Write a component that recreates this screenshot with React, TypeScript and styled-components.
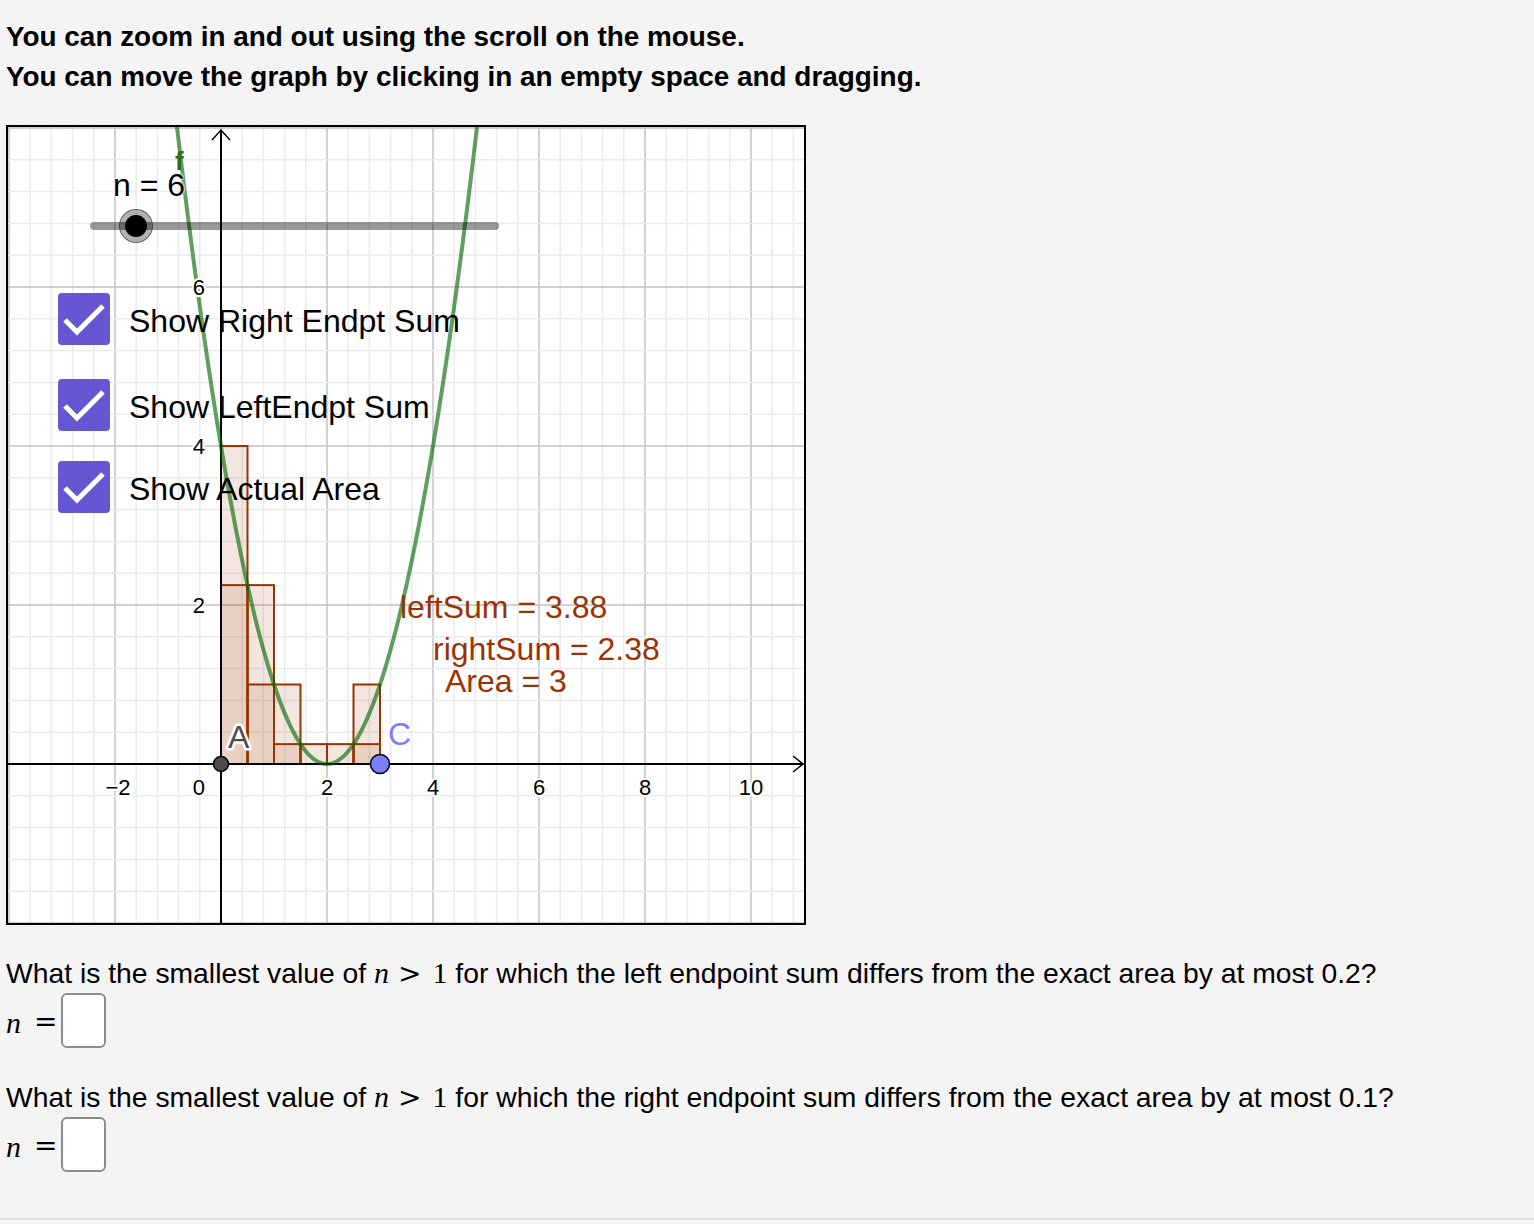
import React from 'react'
import styled, { createGlobalStyle } from 'styled-components'

const GlobalStyle = createGlobalStyle`
	html, body {
		margin: 0;
		padding: 0;
		background: #f4f4f4;
	}

	body {
		font-family: 'Liberation Sans', Arial, sans-serif;
		color: #000;
	}
`

// Graph geometry (inner canvas pixels)
const W = 796
const H = 796
const OX = 213
const OY = 637
const SX = 53
const SY = 79.5
const px = (x: number) => OX + x * SX
const py = (y: number) => OY - y * SY
const f = (x: number) => (x - 2) ** 2

const N = 6
const LO = 0
const HI = 3
const DX = (HI - LO) / N

const BROWN = '#993300'

const Page = styled.div`
	padding: 17px 0 0 6px;
`

const IntroLine = styled.p`
	margin: 0;
	font-size: 27.9px;
	font-weight: bold;
	line-height: 40px;
`

const GraphFrame = styled.div`
	position: relative;
	width: ${W}px;
	height: ${H}px;
	margin-top: 28px;
	border: 2px solid #000;
	background: #fff;
	overflow: hidden;

	svg {
		display: block;
	}
`

const AxisLabel = styled.text`
	font-family: 'Liberation Sans', Arial, sans-serif;
	font-size: 22px;
	fill: #000;
	stroke: #fff;
	stroke-width: 4px;
	stroke-linejoin: round;
	paint-order: stroke;
`

const CurveLabel = styled.text`
	font-family: 'Liberation Sans', Arial, sans-serif;
	font-size: 26px;
	font-weight: bold;
	fill: #2e6b1f;
`

const PointLabel = styled.text<{ $color: string }>`
	font-family: 'Liberation Sans', Arial, sans-serif;
	font-size: 32px;
	fill: ${p => p.$color};
	stroke: #fff;
	stroke-width: 5px;
	stroke-linejoin: round;
	paint-order: stroke;
`

const SumText = styled.text`
	font-family: 'Liberation Sans', Arial, sans-serif;
	font-size: 32px;
	fill: ${BROWN};
`

const Slider = styled.div`
	position: absolute;
	left: 82px;
	top: 40px;
	width: 409px;
`

const SliderLabel = styled.div`
	padding-left: 23px;
	font-size: 32px;
	line-height: 36px;
	text-shadow: 0 0 3px #fff, 0 0 3px #fff, 0 0 2px #fff;
`

const Track = styled.div`
	position: relative;
	height: 8px;
	margin-top: 19px;
	border-radius: 4px;
	background: rgba(0, 0, 0, 0.4);
`

const Knob = styled.span<{ $pos: number }>`
	position: absolute;
	left: ${p => p.$pos - 17}px;
	top: -13px;
	width: 34px;
	height: 34px;
	box-sizing: border-box;
	border-radius: 50%;
	border: 1.5px solid rgba(0, 0, 0, 0.45);
	background: rgba(0, 0, 0, 0.3);

	&::after {
		content: '';
		position: absolute;
		left: 4.5px;
		top: 4.5px;
		width: 22px;
		height: 22px;
		border-radius: 50%;
		background: #000;
	}
`

const CheckRow = styled.label<{ $top: number }>`
	position: absolute;
	left: 50px;
	top: ${p => p.$top}px;
	display: flex;
	align-items: center;
	gap: 19px;
	font-size: 32px;
	line-height: 1;
	white-space: nowrap;
`

const CheckBox = styled.span`
	display: flex;
	align-items: center;
	justify-content: center;
	width: 52px;
	height: 52px;
	border-radius: 4px;
	background: #6557d2;
`

const CheckText = styled.span`
	padding-top: 3px;
`

const Question = styled.p<{ $gap: number }>`
	margin: ${p => p.$gap}px 0 0;
	font-size: 28.3px;
	line-height: 40px;
	white-space: nowrap;
`

const MathVar = styled.span`
	font-family: 'Liberation Serif', 'Times New Roman', serif;
	font-style: italic;
	font-size: 30px;
	line-height: 1;
`

const MathNum = styled.span`
	font-family: 'Liberation Serif', 'Times New Roman', serif;
	font-size: 30px;
	line-height: 1;
`

const MathOp = styled.span<{ $left: number; $right: number }>`
	font-family: 'DejaVu Serif', 'Liberation Serif', serif;
	font-size: 28px;
	line-height: 1;
	margin: 0 ${p => p.$right}px 0 ${p => p.$left}px;
`

const AnswerRow = styled.div`
	display: flex;
	align-items: center;
	height: 55px;

	${MathVar} {
		margin-top: 4px;
	}

	${MathOp} {
		margin-top: 2px;
	}
`

const AnswerBox = styled.input`
	width: 45px;
	height: 55px;
	box-sizing: border-box;
	margin: 0;
	border: 2px solid #8c8c8c;
	border-radius: 6px;
	background: #fff;
	outline: none;
`

const Footer = styled.div`
	margin-top: 46px;
	height: 6px;
	border-top: 2px solid #dedede;
`

const CheckMark = () => (
	<svg width="52" height="52" viewBox="0 0 52 52">
		<polyline points="7,27 19,39 45,13" fill="none" stroke="#fff" strokeWidth="5" />
	</svg>
)

const Graph = () => {
	const verticals = Array.from({ length: 38 }, (_, k) => ({ at: 1 + 21.2 * k, major: k % 5 === 0 }))
	const horizontals = Array.from({ length: 26 }, (_, k) => ({ at: 796 - 31.8 * k, major: k % 5 === 0 }))

	const curve: string[] = []
	for(let x = -1; x <= 5.001; x += 0.02) {
		curve.push(`${ curve.length ? 'L' : 'M' }${ px(x).toFixed(2) },${ py(f(x)).toFixed(2) }`)
	}

	const rects = Array.from({ length: N }, (_, i) => {
		const x0 = LO + i * DX
		return [f(x0), f(x0 + DX)].map(h => ({ x: px(x0), y: py(h), h: h * SY }))
	}).flat()

	return (
		<svg width={ W } height={ H } viewBox={ `0 0 ${ W } ${ H }` }>
			{verticals.map(l => (
				<line key={ `v${ l.at }` } x1={ l.at } x2={ l.at } y1={ 0 } y2={ H }
					stroke={ l.major ? '#c2c2c2' : '#ebebeb' } strokeWidth={ 1.5 } />
			))}
			{horizontals.map(l => (
				<line key={ `h${ l.at }` } x1={ 0 } x2={ W } y1={ l.at } y2={ l.at }
					stroke={ l.major ? '#c2c2c2' : '#ebebeb' } strokeWidth={ 1.5 } />
			))}

			{rects.map((r, i) => (
				<rect key={ i } x={ r.x } y={ r.y } width={ DX * SX } height={ r.h }
					fill={ BROWN } fillOpacity={ 0.12 } stroke={ BROWN } strokeWidth={ 2 } />
			))}

			{/* axes */}
			<line x1={ 0 } x2={ W - 1 } y1={ OY } y2={ OY } stroke="#000" strokeWidth={ 2 } />
			<polyline points={ `${ W - 11 },${ OY - 8 } ${ W - 1 },${ OY } ${ W - 11 },${ OY + 8 }` } fill="none" stroke="#000" strokeWidth={ 1.5 } />
			<line x1={ OX } x2={ OX } y1={ 3 } y2={ H } stroke="#000" strokeWidth={ 2 } />
			<polyline points={ `${ OX - 9 },${ 13 } ${ OX },${ 3 } ${ OX + 9 },${ 13 }` } fill="none" stroke="#000" strokeWidth={ 1.5 } />

			<path d={ curve.join(' ') } fill="none" stroke="#006400" strokeOpacity={ 0.62 } strokeWidth={ 4 } />
			<CurveLabel x={ 167 } y={ 43 }>f</CurveLabel>

			{[-2, 2, 4, 6, 8, 10].map(v => (
				<AxisLabel key={ v } x={ px(v) + (v < 0 ? 3 : 0) } y={ 668 } textAnchor="middle">
					{v < 0 ? `\u2212${ -v }` : v}
				</AxisLabel>
			))}
			<AxisLabel x={ 197 } y={ 668 } textAnchor="end">0</AxisLabel>
			{[2, 4, 6].map(v => (
				<AxisLabel key={ v } x={ 197 } y={ py(v) + 8 } textAnchor="end">{v}</AxisLabel>
			))}

			<SumText x={ 392 } y={ 491 }>leftSum = 3.88</SumText>
			<SumText x={ 425 } y={ 533 }>rightSum = 2.38</SumText>
			<SumText x={ 437 } y={ 565 }>Area = 3</SumText>

			<circle cx={ px(0) } cy={ OY } r={ 7.5 } fill="#4d4d4d" stroke="#000" strokeWidth={ 1.5 } />
			<PointLabel $color="#4d4d4d" x={ 220 } y={ 621 }>A</PointLabel>
			<circle cx={ px(3) } cy={ OY } r={ 9.5 } fill="#7d7dff" stroke="#000" strokeWidth={ 1.5 } />
			<PointLabel $color="#7d7dff" x={ 380 } y={ 618 }>C</PointLabel>
		</svg>
	)
}

const checks = [
	{ label: 'Show Right Endpt Sum', top: 166 },
	{ label: 'Show LeftEndpt Sum', top: 252 },
	{ label: 'Show Actual Area', top: 334 }
]

const questions = [
	{ side: 'left', tol: '0.2', gap: 28 },
	{ side: 'right', tol: '0.1', gap: 29 }
]

const App = () => (
	<>
		<GlobalStyle />
		<Page>
			<IntroLine>You can zoom in and out using the scroll on the mouse.</IntroLine>
			<IntroLine>You can move the graph by clicking in an empty space and dragging.</IntroLine>

			<GraphFrame>
				<Graph />
				<Slider>
					<SliderLabel>n = 6</SliderLabel>
					<Track>
						<Knob $pos={ 46 } />
					</Track>
				</Slider>
				{checks.map(c => (
					<CheckRow key={ c.label } $top={ c.top }>
						<CheckBox><CheckMark /></CheckBox>
						<CheckText>{c.label}</CheckText>
					</CheckRow>
				))}
			</GraphFrame>

			{questions.map(q => (
				<React.Fragment key={ q.side }>
					<Question $gap={ q.gap }>
						What is the smallest value of <MathVar>n</MathVar>
						<MathOp $left={ 9 } $right={ 11 }>&gt;</MathOp>
						<MathNum>1</MathNum> for which the {q.side} endpoint sum differs from the exact area by at most {q.tol}?
					</Question>
					<AnswerRow>
						<MathVar>n</MathVar>
						<MathOp $left={ 13 } $right={ 4 }>=</MathOp>
						<AnswerBox type="text" aria-label="n" />
					</AnswerRow>
				</React.Fragment>
			))}
		</Page>
		<Footer />
	</>
)

export default App
